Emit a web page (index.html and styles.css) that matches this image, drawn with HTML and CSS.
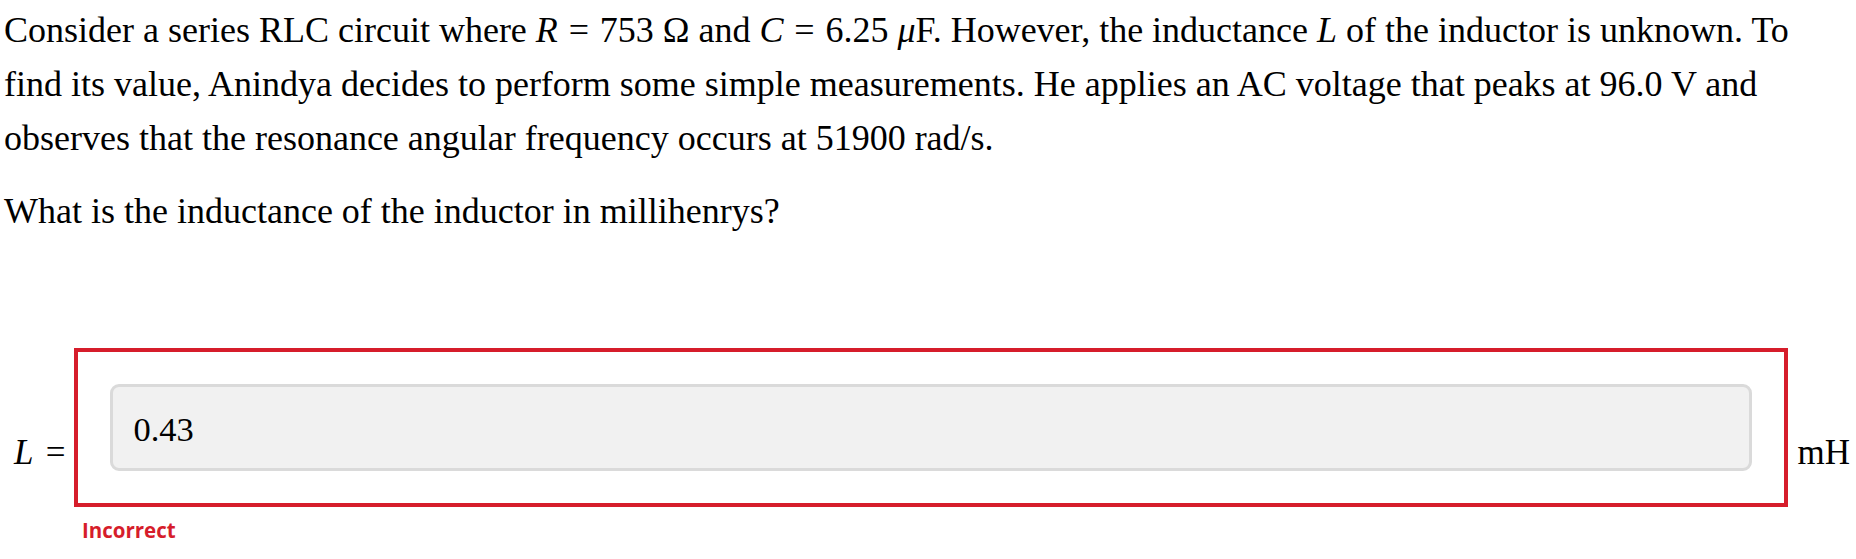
FILE: index.html
```html
<!DOCTYPE html>
<html lang="en">
<head>
<meta charset="utf-8">
<title>RLC inductance question</title>
<link rel="stylesheet" href="styles.css">
</head>
<body>
<div class="question">
  <p class="text">Consider a series RLC circuit where <span class="math"><i>R</i><span class="eq">=</span>753 Ω</span> and <span class="math"><i>C</i><span class="eq">=</span>6.25 <i>μ</i>F</span>. However, the inductance <i>L</i> of the inductor is unknown. To find its value, Anindya decides to perform some simple measurements. He applies an AC voltage that peaks at 96.0 V and observes that the resonance angular frequency occurs at 51900 rad/s.</p>
  <p class="text">What is the inductance of the inductor in millihenrys?</p>
  <div class="answer">
    <div class="answer-row">
      <span class="label"><i>L</i><span class="eq">=</span></span>
      <div class="box incorrect">
        <div class="field">0.43</div>
      </div>
      <span class="unit">mH</span>
    </div>
    <div class="feedback">Incorrect</div>
  </div>
</div>
</body>
</html>
```
FILE: styles.css
```css
html, body {
  margin: 0;
  padding: 0;
  background: #ffffff;
}
body {
  font-family: "Liberation Serif", "Times New Roman", serif;
  color: #000000;
}
.question {
  padding: 3px 0 0 4px;
}
.text {
  margin: 0 0 19px 0;
  max-width: 1826px;
  font-size: 36px;
  line-height: 54px;
}
.math i, .label i, .text i {
  font-style: italic;
}
.eq {
  margin: 0 0.3em;
}
.answer {
  margin-top: 110px;
}
.answer-row {
  display: flex;
  align-items: flex-end;
  padding-right: 6px;
}
.label, .unit {
  font-size: 35px;
  line-height: 35px;
  margin-bottom: 37px;
  white-space: nowrap;
}
.label {
  padding-left: 10px;
  margin-right: 9px;
}
.label .eq {
  margin: 0 0 0 0.35em;
}
.unit {
  margin-left: 10px;
}
.box {
  flex: 1;
  padding: 32px;
  border: 4px solid #d61d2b;
}
.field {
  box-sizing: border-box;
  height: 87px;
  border: 3px solid #dadada;
  border-radius: 9px;
  background: #f1f1f1;
  padding: 22px 20px 0 20px;
  font-size: 34.5px;
  line-height: 40px;
}
.feedback {
  margin: 9px 0 0 78px;
  font-family: "Open Sans", "Noto Sans", sans-serif;
  font-weight: 700;
  font-size: 20.5px;
  color: #d61d2b;
}
```
